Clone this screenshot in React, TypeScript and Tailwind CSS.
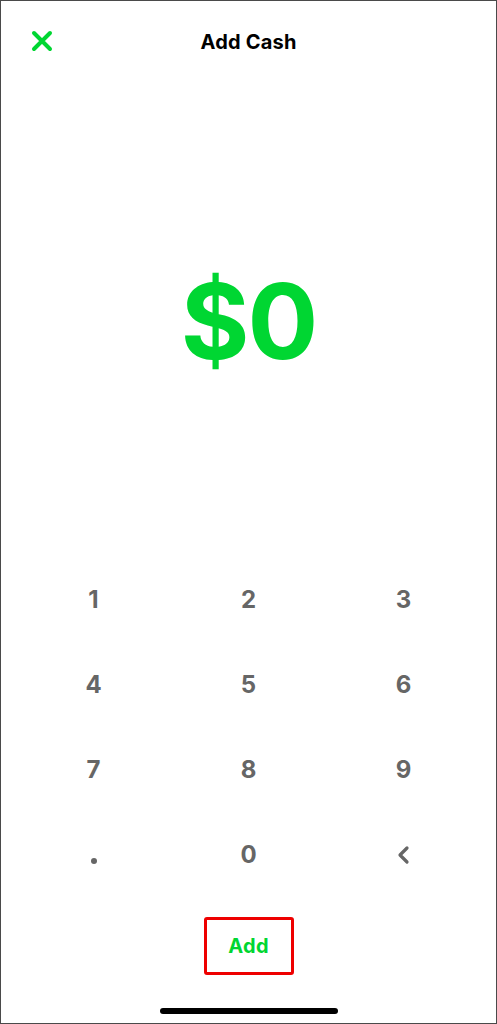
import React from "react";

const keys = ["1", "2", "3", "4", "5", "6", "7", "8", "9", ".", "0", "back"];

export default function App() {
  return (
    <div
      className="w-[497px] h-[1024px] bg-white border border-[#4a4a4a] flex flex-col overflow-hidden"
      style={{ fontFamily: "Inter, 'Noto Sans', sans-serif" }}
    >
      <div className="h-[82px] relative flex items-center justify-center">
        <svg
          className="absolute left-[30px] top-[29px]"
          width="22"
          height="22"
          viewBox="0 0 22 22"
        >
          <path
            d="M3 3 L19 19 M19 3 L3 19"
            stroke="#00d632"
            strokeWidth="4"
            strokeLinecap="round"
            fill="none"
          />
        </svg>
        <span className="text-[20px] font-bold text-black tracking-[0.2px]">
          Add Cash
        </span>
      </div>
      <div className="flex-1 flex items-center justify-center">
        <span className="text-[105px] font-bold text-[#00d632] leading-none tracking-[-2px]">
          $0
        </span>
      </div>
      <div className="grid grid-cols-3 px-[15px]">
        {keys.map((k) => (
          <div key={k} className="h-[85px] flex items-center justify-center">
            {k === "back" ? (
              <svg width="16" height="20" viewBox="0 0 16 20">
                <path
                  d="M11 3 L4 10 L11 17"
                  stroke="#666666"
                  strokeWidth="3.2"
                  strokeLinecap="round"
                  strokeLinejoin="round"
                  fill="none"
                />
              </svg>
            ) : k === "." ? (
              <div className="w-[6px] h-[6px] rounded-full bg-[#666666] mt-[12px]" />
            ) : (
              <span className="text-[24px] font-bold text-[#666666] leading-none">
                {k}
              </span>
            )}
          </div>
        ))}
      </div>
      <div className="flex justify-center mt-[20px]">
        <div className="w-[90px] h-[58px] border-[3px] border-[#ee0000] rounded-[3px] flex items-center justify-center">
          <span className="text-[20px] font-bold text-[#00d632] tracking-[0.3px]">Add</span>
        </div>
      </div>
      <div className="flex justify-center mt-[33px] mb-[9px]">
        <div className="w-[178px] h-[6px] rounded-full bg-black" />
      </div>
    </div>
  );
}
